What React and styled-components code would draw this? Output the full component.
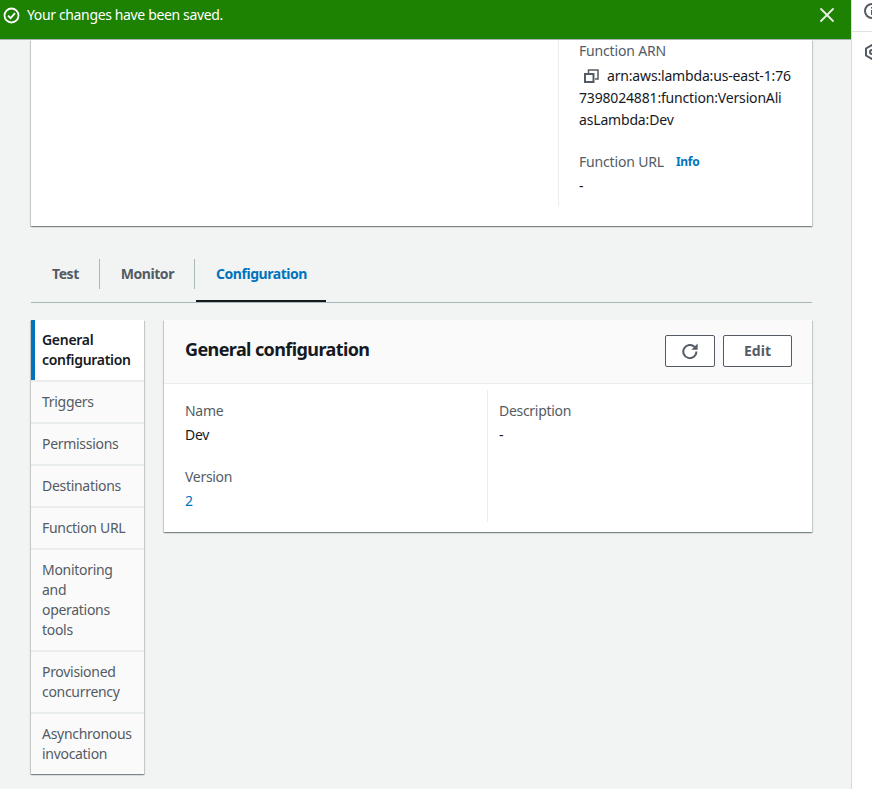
import React from 'react'
import styled, { createGlobalStyle } from 'styled-components'
import { X } from 'lucide-react'

const GlobalStyle = createGlobalStyle`
  html, body { margin: 0; padding: 0; height: 100%; overflow: hidden; }
  body {
    background: #f2f3f3;
    color: #16191f;
    font-family: "Noto Sans", "Open Sans", sans-serif;
    font-size: 14px;
    line-height: 20px;
    letter-spacing: -0.3px;
  }
`

const cardShadow = '0 1px 1px 0 rgba(0, 28, 36, 0.3), 1px 1px 1px 0 rgba(0, 28, 36, 0.15), -1px 1px 1px 0 rgba(0, 28, 36, 0.15)'

const Page = styled.div`
  display: flex;
  height: 789px;
  overflow: hidden;
`
const Main = styled.main`
  width: 851px;
  flex: none;
`
const Flash = styled.div`
  height: 39px;
  background: #1d8102;
  color: #fff;
  display: flex;
  align-items: center;
  padding: 0 12px 9px 3px;
  box-sizing: content-box;
  height: 30px;
  gap: 7px;
  letter-spacing: -0.36px;
  border-bottom: 1px solid #a9b2b3;
`
const FlashText = styled.span`
  flex: 1;
`
const CloseButton = styled.button`
  border: 0;
  background: none;
  color: #e6f0e2;
  padding: 0;
  display: flex;
`
const Content = styled.div`
  padding: 0 39px 0 31px;
`
const SummaryCard = styled.section`
  height: 186px;
  background: #fff;
  box-shadow: ${cardShadow};
  display: flex;
  justify-content: flex-end;
  padding-bottom: 20px;
  box-sizing: border-box;
`
const SummaryColumn = styled.div`
  width: 254px;
  box-sizing: border-box;
  border-left: 1px solid #eaeded;
  padding: 1px 20px 0 20px;
  letter-spacing: -0.17px;
`
const FieldLabel = styled.div`
  color: #545b64;
  line-height: 20px;
  display: flex;
  align-items: center;
  gap: 12px;
`
const InfoLink = styled.a`
  color: #0073bb;
  font-size: 12px;
  font-weight: 700;
  letter-spacing: -0.3px;
`
const ArnValue = styled.div`
  margin-top: 4px;
  line-height: 22px;
  color: #16191f;
  white-space: nowrap;
`
const CopyIcon = styled.svg`
  width: 15px;
  height: 14px;
  vertical-align: -2px;
  margin: 0 8px 0 5px;
`
const PlainValue = styled.div`
  line-height: 22px;
  margin-top: 3px;
  color: ${(p) => (p.$link ? '#0073bb' : '#16191f')};
`
const FieldSpacer = styled.div`
  height: 21px;
`
const TabBar = styled.div`
  margin-top: 32px;
  height: 44px;
  border-bottom: 1px solid #aab7b8;
  display: flex;
`
const Tab = styled.div`
  padding: 0 ${(p) => (p.$active ? 19 : 20)}px 0 ${(p) => (p.$active ? 20 : 21)}px;
  margin-left: ${(p) => (p.$active ? 1 : 0)}px;
  height: 44px;
  box-sizing: border-box;
  line-height: 32px;
  font-weight: 700;
  letter-spacing: -0.45px;
  color: ${(p) => (p.$active ? '#0073bb' : '#545b64')};
  border-bottom: ${(p) => (p.$active ? '2px solid #16191f' : 'none')};
`
const TabDivider = styled.div`
  width: 1px;
  height: 30px;
  margin-top: 1px;
  background: #aab7b8;
`
const Columns = styled.div`
  margin-top: 17px;
  display: flex;
  align-items: flex-start;
  gap: 20px;
`
const SideNav = styled.nav`
  width: 113px;
  flex: none;
  display: flex;
  flex-direction: column;
  gap: 2px;
  background: #eaeded;
  box-shadow: ${cardShadow};
`
const NavItem = styled.div`
  padding: 10px 10px 10px ${(p) => (p.$active ? 7 : 11)}px;
  background: ${(p) => (p.$active ? '#fff' : '#fafafa')};
  color: ${(p) => (p.$active ? '#16191f' : '#545b64')};
  font-weight: ${(p) => (p.$active ? 600 : 400)};
  border-left: ${(p) => (p.$active ? '4px solid #0073bb' : 'none')};
`
const Panel = styled.section`
  flex: 1;
  background: #fff;
  box-shadow: ${cardShadow};
  padding-bottom: 10px;
`
const PanelHeader = styled.header`
  height: 64px;
  box-sizing: border-box;
  background: #fafafa;
  border-bottom: 1px solid #eaeded;
  display: flex;
  align-items: center;
  padding: 0 20px 0 21px;
  gap: 8px;
`
const PanelTitle = styled.h2`
  flex: 1;
  margin: 0 0 5px;
  font-size: 18px;
  line-height: 22px;
  font-weight: 700;
  letter-spacing: -0.6px;
  color: #16191f;
`
const Button = styled.button`
  height: 32px;
  width: ${(p) => p.$width}px;
  margin-bottom: 1px;
  box-sizing: border-box;
  border: 1px solid #545b64;
  border-radius: 2px;
  background: #fff;
  color: #545b64;
  font: inherit;
  font-weight: 700;
  letter-spacing: 0;
  display: flex;
  align-items: center;
  justify-content: center;
  padding: 0;
`
const PanelBody = styled.div`
  display: grid;
  grid-template-columns: 323px 1fr;
  margin-top: 6px;
  height: 132px;
`
const PanelColumn = styled.div`
  padding: 11px 11px 0 ${(p) => (p.$right ? 11 : 21)}px;
  border-left: ${(p) => (p.$right ? '1px solid #eaeded' : 'none')};
`
const RightRail = styled.aside`
  flex: 1;
  background: #fff;
  border-left: 1px solid #d5dbdb;
`
const RailIcon = styled.div`
  height: ${(p) => p.$height}px;
  box-sizing: border-box;
  padding: 0 0 ${(p) => p.$lift}px 12px;
  display: flex;
  align-items: center;
  border-bottom: ${(p) => (p.$line ? '1px solid #dfe3e3' : 'none')};
`

const navItems = [
  'Triggers',
  'Permissions',
  'Destinations',
  'Function URL',
  'Monitoring and operations tools',
  'Provisioned concurrency',
  'Asynchronous invocation',
]

function SavedIcon() {
  return (
    <svg width="17" height="17" viewBox="0 0 17 17" fill="none" stroke="#fff" strokeWidth="1.8">
      <circle cx="8.5" cy="8.5" r="7" />
      <path d="M5 8.7l2.6 2.5L12 6.2" />
    </svg>
  )
}

function CopyGlyph() {
  return (
    <CopyIcon viewBox="0 0 15 14" fill="none" stroke="#545b64">
      <rect x="1" y="5" width="8.5" height="8" strokeWidth="2" />
      <path d="M4.5 4V1h9.5v9h-3" strokeWidth="1.5" />
    </CopyIcon>
  )
}

function RefreshGlyph() {
  return (
    <svg width="16" height="16" viewBox="0 0 16 16" fill="none" stroke="#545b64" strokeWidth="2">
      <path d="M12.6 3.9A6.6 6.6 0 1 0 14.5 8.6" />
      <path d="M15.6 0.6v6.2H9.4z" fill="#545b64" stroke="none" />
    </svg>
  )
}

export default function App() {
  return (
    <Page>
      <GlobalStyle />
      <Main>
        <Flash>
          <SavedIcon />
          <FlashText>Your changes have been saved.</FlashText>
          <CloseButton><X size={24} strokeWidth={1.8} /></CloseButton>
        </Flash>
        <Content>
          <SummaryCard>
            <SummaryColumn>
              <FieldLabel>Function ARN</FieldLabel>
              <ArnValue>
                <CopyGlyph />
                arn:aws:lambda:us-east-1:76<br />
                7398024881:function:VersionAli<br />
                asLambda:Dev
              </ArnValue>
              <FieldSpacer />
              <FieldLabel>
                Function URL <InfoLink>Info</InfoLink>
              </FieldLabel>
              <PlainValue>-</PlainValue>
            </SummaryColumn>
          </SummaryCard>
          <TabBar>
            <Tab>Test</Tab>
            <TabDivider />
            <Tab>Monitor</Tab>
            <TabDivider />
            <Tab $active>Configuration</Tab>
          </TabBar>
          <Columns>
            <SideNav>
              <NavItem $active>General configuration</NavItem>
              {navItems.map((item) => (
                <NavItem key={item}>{item}</NavItem>
              ))}
            </SideNav>
            <Panel>
              <PanelHeader>
                <PanelTitle>General configuration</PanelTitle>
                <Button $width={50}><RefreshGlyph /></Button>
                <Button $width={69}>Edit</Button>
              </PanelHeader>
              <PanelBody>
                <PanelColumn>
                  <FieldLabel>Name</FieldLabel>
                  <PlainValue>Dev</PlainValue>
                  <FieldSpacer />
                  <FieldLabel>Version</FieldLabel>
                  <PlainValue $link>2</PlainValue>
                </PanelColumn>
                <PanelColumn $right>
                  <FieldLabel>Description</FieldLabel>
                  <PlainValue>-</PlainValue>
                </PanelColumn>
              </PanelBody>
            </Panel>
          </Columns>
        </Content>
      </Main>
      <RightRail>
        <RailIcon $height={32} $lift={9} $line>
          <svg width="16" height="16" viewBox="0 0 16 16" fill="none" stroke="#545b64" strokeWidth="2"><circle cx="8" cy="8" r="7" /><path d="M8 7v5M8 4v1.5" /></svg>
        </RailIcon>
        <RailIcon $height={44} $lift={4}>
          <svg width="16" height="16" viewBox="0 0 16 16" fill="none" stroke="#545b64" strokeWidth="2"><path d="M8 1l6 3.5v7L8 15l-6-3.5v-7z" /><circle cx="8" cy="8" r="2" /></svg>
        </RailIcon>
      </RightRail>
    </Page>
  )
}
